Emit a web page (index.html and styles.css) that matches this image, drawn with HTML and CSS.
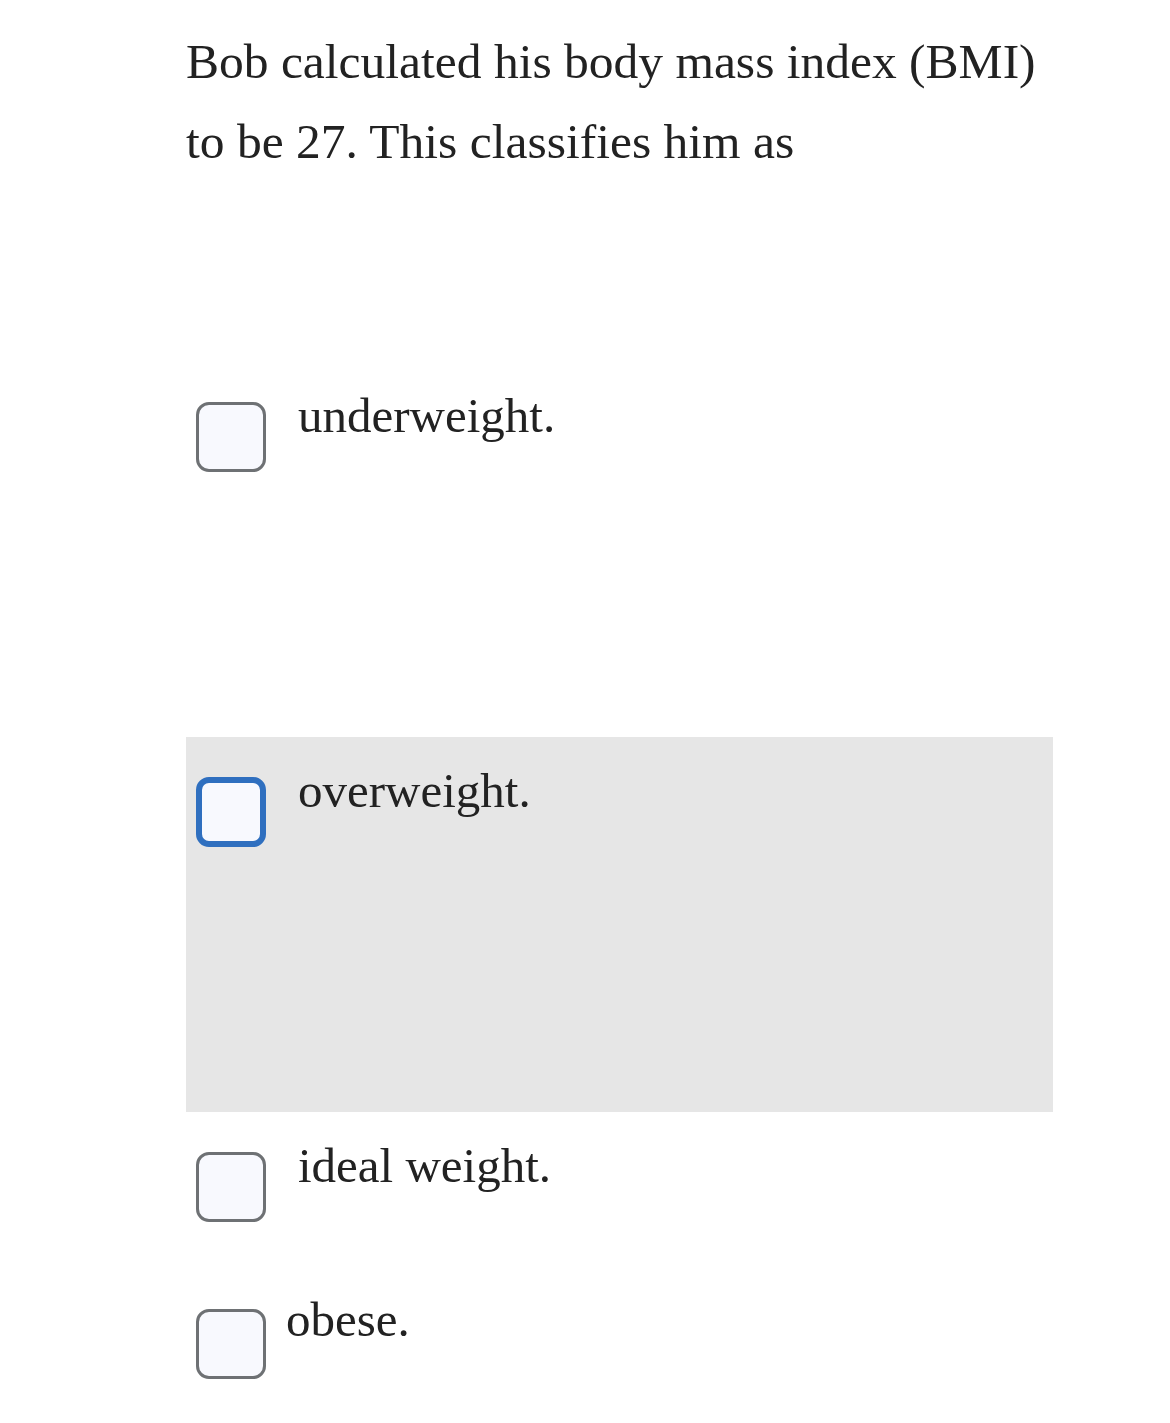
FILE: index.html
```html
<!DOCTYPE html>
<html>
<head>
<meta charset="utf-8">
<link rel="stylesheet" href="styles.css">
</head>
<body>
<div class="quiz">
  <p class="question">Bob calculated his body mass index (BMI) to be 27. This classifies him as</p>
  <div class="options">
    <div class="option tall">
      <span class="box"></span>
      <span class="label">underweight.</span>
    </div>
    <div class="option tall hover">
      <span class="box focus"></span>
      <span class="label">overweight.</span>
    </div>
    <div class="option mid">
      <span class="box"></span>
      <span class="label">ideal weight.</span>
    </div>
    <div class="option last">
      <span class="box"></span>
      <span class="label narrow">obese.</span>
    </div>
  </div>
</div>
</body>
</html>
```

FILE: styles.css
```css
html, body {
  margin: 0;
  padding: 0;
  background: #ffffff;
}
body {
  font-family: "Liberation Serif", "Times New Roman", serif;
  color: #222222;
}
.quiz {
  margin-left: 186px;
  width: 867px;
}
.question {
  margin: 0;
  padding-top: 22px;
  font-size: 49.5px;
  line-height: 80px;
}
.options {
  margin-top: 180px;
}
.option {
  display: flex;
  align-items: flex-start;
  box-sizing: border-box;
  padding: 14px 0 0 10px;
}
.option.tall { height: 375px; }
.option.mid { height: 157px; }
.option.last { height: 155px; padding-top: 11px; }
.option.hover { background: #e6e6e6; }
.box {
  flex: none;
  box-sizing: border-box;
  width: 70px;
  height: 70px;
  margin-top: 26px;
  border: 3.5px solid #6e7174;
  border-radius: 13px;
  background: #f8f9fe;
}
.last .box { margin-top: 29px; }
.box.focus {
  border: 6px solid #2f6fbf;
}
.label {
  margin-left: 32px;
  font-size: 49px;
  line-height: 80px;
}
.label.narrow { margin-left: 20px; }
```
